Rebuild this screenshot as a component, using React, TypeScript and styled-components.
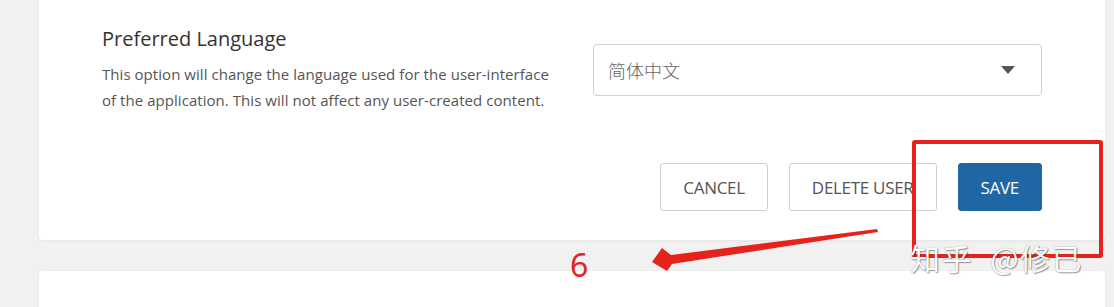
import styled, { createGlobalStyle } from 'styled-components';

const GlobalStyle = createGlobalStyle`
  html, body {
    margin: 0;
    padding: 0;
    background: #f1f1f1;
  }
  body {
    font-family: 'Open Sans', 'Noto Sans CJK SC', sans-serif;
    color: #444;
  }
`;

const Page = styled.div`
  position: relative;
  width: 1114px;
  height: 307px;
  overflow: hidden;
  padding: 0 9px 0 39px;
  box-sizing: border-box;
  display: flex;
  flex-direction: column;
  gap: 31px;
`;

const Card = styled.section<{ $height?: number }>`
  background: #fff;
  border-radius: 0 0 4px 4px;
  box-shadow: 0 1px 3px rgba(0, 0, 0, 0.06);
  padding: 27px 63px 29px;
  display: flex;
  flex-direction: column;
  flex-shrink: 0;
  ${({ $height }) => ($height ? `height: ${$height}px; box-sizing: border-box;` : '')}

  & + & {
    border-radius: 4px 4px 0 0;
  }
`;

const SettingRow = styled.div`
  display: grid;
  grid-template-columns: 491px 449px;
  align-items: center;
`;

const SettingInfo = styled.div`
  display: flex;
  flex-direction: column;
  gap: 10px;
`;

const SettingTitle = styled.h3`
  margin: 0;
  font-size: 20px;
  font-weight: 400;
  line-height: 24px;
  color: #333;
`;

const SettingDesc = styled.p`
  margin: 0;
  max-width: 452px;
  font-size: 15px;
  line-height: 26px;
  color: #555;
  letter-spacing: 0.05px;
`;

const Select = styled.div`
  height: 52px;
  box-sizing: border-box;
  border: 1px solid #d2d2d2;
  border-radius: 4px;
  padding: 0 26px 0 14px;
  display: flex;
  align-items: center;
  justify-content: space-between;
  font-family: 'Noto Sans CJK SC', sans-serif;
  font-size: 18px;
  color: #666;
  font-weight: 300;
`;

const Caret = styled.span`
  width: 0;
  height: 0;
  border-left: 7px solid transparent;
  border-right: 7px solid transparent;
  border-top: 8px solid #555;
`;

const Actions = styled.div`
  margin-top: 50px;
  display: flex;
  justify-content: flex-end;
  gap: 21px;
`;

const Button = styled.button<{ $primary?: boolean }>`
  height: 48px;
  padding: 0 22px;
  border-radius: 3px;
  font-family: 'Open Sans', sans-serif;
  font-size: 17px;
  letter-spacing: -0.3px;
  cursor: pointer;
  border: 1px solid ${({ $primary }) => ($primary ? '#1f67a4' : '#cfcfcf')};
  background: ${({ $primary }) => ($primary ? '#1f67a4' : '#fff')};
  color: ${({ $primary }) => ($primary ? '#fff' : '#555')};
`;

const Highlight = styled.div`
  position: absolute;
  left: 912px;
  top: 140px;
  width: 191px;
  height: 118px;
  box-sizing: border-box;
  border: 4px solid #e5231c;
  border-radius: 3px;
`;

const Arrow = styled.svg`
  position: absolute;
  left: 0;
  top: 0;
`;

const StepNumber = styled.span`
  position: absolute;
  left: 570px;
  top: 245px;
  font-family: 'Noto Sans', sans-serif;
  font-size: 32px;
  line-height: 40px;
  color: #e0261f;
`;

const Watermark = styled.span`
  position: absolute;
  left: 910px;
  top: 237px;
  font-family: 'Noto Sans CJK SC', sans-serif;
  font-size: 30px;
  line-height: 40px;
  color: #fff;
  letter-spacing: 1.5px;
  word-spacing: 9px;
  text-shadow: 0 0 1px rgba(0, 0, 0, 0.45), 1px 1px 1px rgba(0, 0, 0, 0.35);
  white-space: nowrap;
`;

export default function App() {
  return (
    <>
      <GlobalStyle />
      <Page>
        <Card $height={240}>
          <SettingRow>
            <SettingInfo>
              <SettingTitle>Preferred Language</SettingTitle>
              <SettingDesc>
                This option will change the language used for the user-interface of the
                application. This will not affect any user-created content.
              </SettingDesc>
            </SettingInfo>
            <Select>
              <span>简体中文</span>
              <Caret />
            </Select>
          </SettingRow>
          <Actions>
            <Button>CANCEL</Button>
            <Button>DELETE USER</Button>
            <Button $primary>SAVE</Button>
          </Actions>
        </Card>
        <Card $height={60} />

        <Highlight />
        <Arrow width="1114" height="307" viewBox="0 0 1114 307">
          <polygon
            points="877,229 671,255 662,248 652,262 667,271 672,264 878,232"
            fill="#e5231c"
          />
        </Arrow>
        <StepNumber>6</StepNumber>
        <Watermark>知乎 @修已</Watermark>
      </Page>
    </>
  );
}
